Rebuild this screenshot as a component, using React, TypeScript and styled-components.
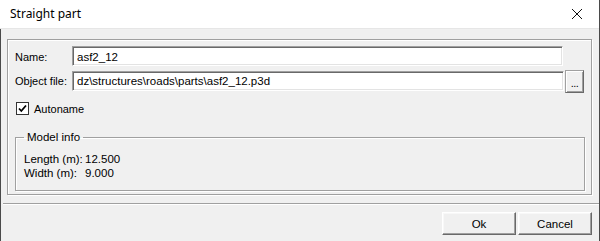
import React from "react";
import styled, { createGlobalStyle } from "styled-components";

const Global = createGlobalStyle`
  html, body { margin: 0; padding: 0; background: #f0f0f0; }
  * { box-sizing: border-box; }
`;

const Window = styled.div`
  width: 600px;
  height: 241px;
  display: flex;
  flex-direction: column;
  border-right: 1px solid #4a4a4a;
  font-family: "Liberation Sans", Arial, sans-serif;
  font-size: 11px;
  color: #000;
  overflow: hidden;
`;

const TitleBar = styled.div`
  height: 29px;
  flex: none;
  background: #fff;
  display: flex;
  align-items: center;
  justify-content: space-between;
  padding: 0 10px 1px 10px;
  border-bottom: 1px solid #e6e6e6;
  font-family: "Noto Sans", "Open Sans", sans-serif;
  font-size: 12px;
`;

const CloseIcon = styled.svg`
  width: 12px;
  height: 12px;
  margin-right: 6px;
`;

const Client = styled.div`
  flex: 1;
  background: #f0f0f0;
  border-left: 1px solid #4a4a4a;
  display: flex;
  flex-direction: column;
  padding-top: 10px;
`;

const OuterBox = styled.div`
  margin: 0 7px 0 6px;
  height: 156px;
  border: 1px solid #a0a0a0;
  box-shadow: inset 1px 1px 0 #fff, 1px 1px 0 #fff;
  padding: 6px 0 0 7px;
  display: flex;
  flex-direction: column;
`;

const Row = styled.div<{ $mt?: number }>`
  display: flex;
  align-items: center;
  margin-top: ${(p) => p.$mt ?? 0}px;
`;

const Label = styled.span`
  width: 57px;
  flex: none;
  padding-top: 1px;
`;

const TextInput = styled.div<{ $w: number; $h: number }>`
  width: ${(p) => p.$w}px;
  height: ${(p) => p.$h}px;
  background: #fff;
  border-style: solid;
  border-width: 1px;
  border-color: #a0a0a0 #fff #fff #a0a0a0;
  box-shadow: inset 1px 1px 0 #696969, inset -1px -1px 0 #e3e3e3;
  display: flex;
  align-items: center;
  padding: 1px 0 0 4px;
  font-size: 11.5px;
`;

const BrowseButton = styled.div`
  width: 19px;
  height: 23px;
  margin-left: 1px;
  margin-top: 2px;
  border: 1px solid #696969;
  border-top-color: #a0a0a0;
  border-left-color: #a0a0a0;
  box-shadow: inset 1px 1px 0 #fff, inset -1px -1px 0 #a0a0a0;
  background: #f0f0f0;
  display: flex;
  align-items: center;
  justify-content: center;
  padding-top: 3px;
  font-size: 11px;
  letter-spacing: -0.5px;
`;

const CheckRow = styled.label`
  display: flex;
  align-items: center;
  margin: 9px 0 0 1px;
  gap: 5px;
`;

const CheckBox = styled.svg`
  width: 13px;
  height: 13px;
`;

const Group = styled.fieldset`
  margin: 16px 6px 0 0;
  height: 60px;
  padding: 10px 0 0 8px;
  border: 1px solid #a0a0a0;
  box-shadow: inset 1px 1px 0 #fff, 1px 1px 0 #fff;
  min-width: 0;
`;

const Legend = styled.legend`
  padding: 0 3px;
  margin-left: 0;
  font-size: 11.5px;
`;

const InfoGrid = styled.div`
  display: grid;
  grid-template-columns: 61px auto;
  row-gap: 1px;
  line-height: 13px;
  font-size: 11.5px;
`;

const Separator = styled.div`
  margin: 8px 0 0 2px;
  height: 2px;
  border-top: 1px solid #a0a0a0;
  border-bottom: 1px solid #fff;
`;

const ButtonBar = styled.div`
  display: flex;
  justify-content: flex-end;
  gap: 2px;
  padding: 7px 7px 0 0;
`;

const Button = styled.div`
  width: 74px;
  height: 23px;
  border: 1px solid #696969;
  border-top-color: #fff;
  border-left-color: #fff;
  box-shadow: inset -1px -1px 0 #a0a0a0, inset 1px 1px 0 #f8f8f8;
  background: #f0f0f0;
  display: flex;
  align-items: center;
  justify-content: center;
  font-size: 11.5px;
`;

export default function App() {
  return (
    <>
      <Global />
      <Window>
        <TitleBar>
          <span>Straight part</span>
          <CloseIcon viewBox="0 0 12 12">
            <path d="M1 1 L11 11 M11 1 L1 11" stroke="#111" strokeWidth="1" fill="none" />
          </CloseIcon>
        </TitleBar>
        <Client>
          <OuterBox>
            <Row>
              <Label>Name:</Label>
              <TextInput $w={491} $h={20}>asf2_12</TextInput>
            </Row>
            <Row $mt={2}>
              <Label>Object file:</Label>
              <TextInput $w={492} $h={20}>dz\structures\roads\parts\asf2_12.p3d</TextInput>
              <BrowseButton>...</BrowseButton>
            </Row>
            <CheckRow>
              <CheckBox viewBox="0 0 13 13">
                <rect x="0.5" y="0.5" width="12" height="12" fill="#fff" stroke="#333" />
                <path d="M3 6.5 L5.3 9 L10 3.5" stroke="#000" strokeWidth="1.8" fill="none" />
              </CheckBox>
              <span>Autoname</span>
            </CheckRow>
            <Group>
              <Legend>Model info</Legend>
              <InfoGrid>
                <span>Length (m):</span>
                <span>12.500</span>
                <span>Width (m):</span>
                <span>9.000</span>
              </InfoGrid>
            </Group>
          </OuterBox>
          <Separator />
          <ButtonBar>
            <Button>Ok</Button>
            <Button>Cancel</Button>
          </ButtonBar>
        </Client>
      </Window>
    </>
  );
}
